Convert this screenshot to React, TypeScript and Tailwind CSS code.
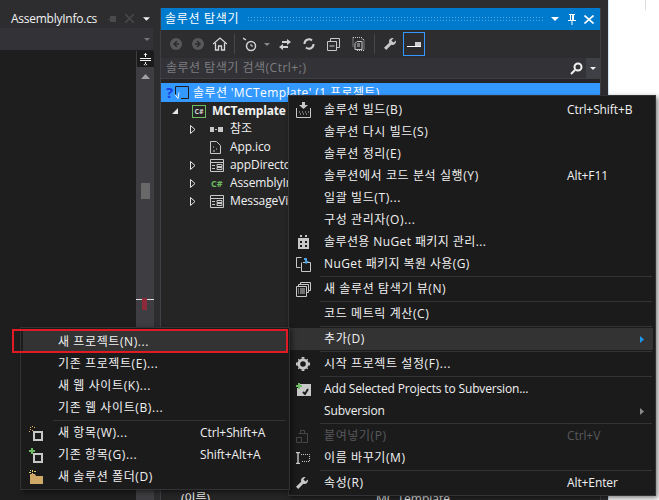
import React from "react";

const FONT = "[font-family:'Open_Sans','Noto_Sans_CJK_KR',sans-serif]";

type Item = { t?: string; k?: string; icon?: React.ReactNode; sep?: boolean; hot?: boolean; arrow?: string; off?: boolean };

const S = "#c8c8c8";

const Build = () => (
  <svg width="15" height="16" viewBox="0 0 15 16" fill="none">
    <path d="M6 0h3v3h3L7.500 7 3 3h3z" fill={S} />
    <path d="M.5 6v9.500h14V6" stroke={S} />
    <path d="M3 10h1M6 10h1M9 10h1M12 10h1M4 12h1M7 12h1M10 12h1" stroke={S} />
  </svg>
);
const Gift = () => (
  <svg className="ml-[2px]" width="11" height="14" viewBox="0 0 11 14" fill={S}>
    <path d="M0 3h11v11H0z" />
    <path d="M2 0h2v2H2zM7 0h2v2H7z" />
    <path d="M2 6h2v2H2zM7 6h2v2H7zM2 10h2v2H2zM7 10h2v2H7z" fill="#1b1b1c" />
  </svg>
);
const Restore = () => (
  <svg width="15" height="15" viewBox="0 0 15 15" fill="none">
    <path d="M4.500 10.500h-4v-10h5M7 5.500h7.500v9h-9v-9" stroke={S} />
    <path d="M8 1h3v3h2l-3 3-1-1V3H8z" fill="#4ba3e3" />
  </svg>
);
const Views = () => (
  <svg width="15" height="15" viewBox="0 0 15 15" fill="none" stroke={S}>
    <path d="M4.500 2.500v-2h10v8h-2" />
    <path d="M2.500 4.500v-2h10v8h-2" />
    <path d="M.5 4.500h10v10H.5z" fill="#1b1b1c" />
    <path d="M2 7h1M4 7h5M2 9h1M4 9h5M2 11h1M4 11h5" />
  </svg>
);
const Gear = () => (
  <svg width="14" height="14" viewBox="0 0 15 15">
    <circle cx="7.500" cy="7.500" r="4.500" fill="none" stroke={S} strokeWidth="3" />
    <path d="M6 0h3v2H6zM6 13h3v2H6zM0 6h2v3H0zM13 6h2v3h-2zM2 3l1-1 1.500 1.500-1 1zM12 2l1 1-1.500 1.500-1-1zM2 12l1 1 1.500-1.500-1-1zM12 13l1-1-1.500-1.500-1 1z" fill={S} />
  </svg>
);
const AddCheck = () => (
  <svg width="15" height="13" viewBox="0 0 15 13">
    <path d="M4 1h11v12H1V5h3z" fill={S} />
    <path d="M2 0h2v2h2v2H4v2H2V4H0V2h2z" fill="#6dbb63" />
    <path d="M7 9l2 2 3-5" stroke="#1b1b1c" strokeWidth="2" fill="none" />
  </svg>
);
const Paste = () => (
  <svg width="12" height="14" viewBox="0 0 12 14" fill="none" stroke="#464649">
    <path d="M2.500 4.500h9v9h-5M4.500 4V1.500h4V4" />
    <path d="M.5 8.500h5v5h-5z" />
  </svg>
);
const Rename = () => (
  <svg width="14" height="12" viewBox="0 0 14 12" fill="none" stroke={S}>
    <path d="M0 .5h4M0 11.500h4M2 1v10" strokeWidth="1.400" />
    <path d="M5 2.500h8.500v7H5" strokeDasharray="1 1" />
  </svg>
);
const Wrench = ({ c = S, s = 12 }: { c?: string; s?: number }) => (
  <svg width={s} height={s} viewBox="0 0 12 12" fill={c}>
    <path d="M8.500 0C6.600 0 5 1.500 5 3.500c0 .4.100.8.200 1.200L0 9.800 2.200 12l5.100-5.200c.4.100.8.200 1.200.2C10.400 7 12 5.400 12 3.500c0-.4-.100-.8-.200-1.100L9.500 4.600 7.400 2.500 9.600.2C9.300.1 8.900 0 8.500 0z" />
  </svg>
);
const NewItem = ({ plus }: { plus?: boolean }) => (
  <svg width="14" height="15" viewBox="0 0 14 15" fill="none">
    {plus ? (
      <path d="M2 0h2v2h2v2H4v2H2V4H0V2h2z" fill="#6dbb63" />
    ) : (
      <path d="M1 1h1v1H1zM3 0h1v1H3zM5 1h1v1H5zM1 3h1v1H1zM3 4h1v1H3zM0 5h1v1H0z" fill="#e0b060" />
    )}
    <path d="M5 6h8v8H5z" stroke={S} strokeWidth="2" />
  </svg>
);
const Folder = () => (
  <svg width="14" height="14" viewBox="0 0 14 14">
    <path d="M1 4h5l1 2h7v8H1z" fill="#d0a868" />
    <path d="M3 0h1v2H3zM0 2h2v1H0zM5 1h2v1H5zM3 3h1v1H3zM1 0h1v1H1z" fill="#e8d070" />
  </svg>
);

const M1: Item[] = [
  { t: "솔루션 빌드(B)", k: "Ctrl+Shift+B", icon: <Build /> },
  { t: "솔루션 다시 빌드(S)" },
  { t: "솔루션 정리(E)" },
  { t: "솔루션에서 코드 분석 실행(Y)", k: "Alt+F11" },
  { t: "일괄 빌드(T)..." },
  { t: "구성 관리자(O)..." },
  { t: "솔루션용 NuGet 패키지 관리...", icon: <Gift /> },
  { t: "NuGet 패키지 복원 사용(G)", icon: <Restore /> },
  { sep: true },
  { t: "새 솔루션 탐색기 뷰(N)", icon: <Views /> },
  { sep: true },
  { t: "코드 메트릭 계산(C)" },
  { sep: true },
  { t: "추가(D)", hot: true, arrow: "#1c97ea" },
  { sep: true },
  { t: "시작 프로젝트 설정(F)...", icon: <Gear /> },
  { sep: true },
  { t: "Add Selected Projects to Subversion...", icon: <AddCheck /> },
  { t: "Subversion", arrow: "#8a8a8a" },
  { sep: true },
  { t: "붙여넣기(P)", k: "Ctrl+V", icon: <Paste />, off: true },
  { t: "이름 바꾸기(M)", icon: <Rename /> },
  { sep: true },
  { t: "속성(R)", k: "Alt+Enter", icon: <Wrench /> },
];

const M2: Item[] = [
  { t: "새 프로젝트(N)...", hot: true },
  { t: "기존 프로젝트(E)..." },
  { t: "새 웹 사이트(K)..." },
  { t: "기존 웹 사이트(B)..." },
  { sep: true },
  { t: "새 항목(W)...", k: "Ctrl+Shift+A", icon: <NewItem /> },
  { t: "기존 항목(G)...", k: "Shift+Alt+A", icon: <NewItem plus /> },
  { t: "새 솔루션 폴더(D)", icon: <Folder /> },
];

function track(t = "") {
  const ko = /[가-힣]/.test(t);
  const en = /[A-Za-z]{3}/.test(t);
  if (ko && en) return "tracking-[0.4px]";
  if (ko) return "tracking-[0.6px]";
  return "tracking-[-0.15px]";
}

function Row({ it, kw, col }: { it: Item; kw: string; col: string }) {
  if (it.sep)
    return (
      <div className="ml-[30px] mr-[1px] py-[1px]">
        <div className="h-px bg-[#333337]" />
      </div>
    );
  return (
    <div className={`flex items-center h-[22px] text-[12px] leading-[22px] whitespace-nowrap ${it.hot ? "bg-[#333334]" : ""} ${it.off ? "text-[#59595b]" : "text-[#f1f1f1]"}`}>
      <div className={`${col} pl-[6px] flex items-center shrink-0`}>{it.icon}</div>
      <div className={`flex-1 ${track(it.t)}`}>{it.t}</div>
      {it.k && <div className={`${kw} tracking-[-0.1px]`}>{it.k}</div>}
      {it.arrow && (
        <div className="w-[13px] shrink-0 flex">
          <svg width="5" height="7" viewBox="0 0 5 7"><path d="M0 0l4 3.500L0 7z" fill={it.arrow} /></svg>
        </div>
      )}
    </div>
  );
}

function TreeRow({ indent, arrow, icon, text, bold }: { indent: string; arrow?: "open" | "closed"; icon: React.ReactNode; text: string; bold?: boolean }) {
  return (
    <div className={`flex items-center h-[18px] text-[12px] text-[#f1f1f1] whitespace-nowrap ${indent}`}>
      <div className="w-[20px] shrink-0 flex items-center">
        {arrow === "open" && <svg width="6" height="6" viewBox="0 0 6 6"><path d="M6 0v6H0z" fill="#e6e6e6" /></svg>}
        {arrow === "closed" && <svg width="6" height="9" viewBox="0 0 6 9"><path d="M.5.500l4.500 4-4.500 4z" fill="none" stroke="#e6e6e6" /></svg>}
      </div>
      <div className="w-[20px] shrink-0 flex items-center">{icon}</div>
      <span className={bold ? "font-bold tracking-[-0.2px]" : "tracking-[-0.1px]"}>{text}</span>
    </div>
  );
}

const FormIcon = () => (
  <svg width="14" height="13" viewBox="0 0 14 13" fill="none" stroke="#c8c8c8">
    <path d="M.5.500h13v12H.5zM1 3.500h12M2 6.500h3M2 9.500h3M7 5.500h5v2H7zM7 8.500h5v2H7z" />
  </svg>
);

export default function App() {
  return (
    <div className={`relative w-[659px] h-[500px] overflow-hidden flex bg-[#2d2d30] ${FONT}`}>
      {/* editor side */}
      <div className="w-[160px] shrink-0 flex flex-col">
        <div className="h-[28px] flex items-center pl-[11px] pt-[9px] text-[12px] text-[#f1f1f1] whitespace-nowrap">
          <span className="tracking-[-0.25px]">AssemblyInfo.cs</span>
          <svg className="ml-[10px]" width="10" height="8" viewBox="0 0 10 8" fill="#4a4a4d"><path d="M1 4h2V1h6v6H3V5H1z" /></svg>
          <svg className="ml-[8px]" width="9" height="9" viewBox="0 0 9 9" stroke="#4a4a4d" strokeWidth="1.500"><path d="M0 0l9 9M9 0l-9 9" /></svg>
          <svg className="ml-[9px]" width="7" height="4" viewBox="0 0 8 4" fill="#f1f1f1"><path d="M0 0h8L4 4z" /></svg>
        </div>
        <div className="h-[23px] mr-[7px] bg-[#333337] border-b border-[#1e1e1e] flex items-center justify-end pr-[3px]">
          <svg width="6" height="3" viewBox="0 0 6 3" fill="#77777a"><path d="M0 0h6L3 3z" /></svg>
        </div>
        <div className="flex-1 flex">
          <div className="w-[136px] bg-[#1e1e1e]" />
          <div className="relative w-[18px] bg-[#3e3e42] flex flex-col items-center">
            <div className="w-[17px] h-[16px] bg-[#1b1b1b] flex items-center justify-center">
              <svg width="11" height="13" viewBox="0 0 11 13" fill="#f1f1f1"><path d="M0 5h11v1H0zM0 7h11v1H0zM5 0h1v4H5zM5 9h1v4H5zM3.500 2L5.500 0l2 2zM3.500 11l2 2 2-2z" /></svg>
            </div>
            <svg className="mt-[7px]" width="9" height="5" viewBox="0 0 9 5" fill="#a0a0a0"><path d="M4.500 0L9 5H0z" /></svg>
            <div className="mt-[104px] w-[9px] h-[16px] bg-[#686868]" />
            <div className="absolute left-0 top-[248px] w-[18px] h-px bg-[#e0e0e0]" />
            <div className="absolute left-[6px] top-[247px] w-[5px] h-[12px] bg-[#8b2b39]" />
          </div>
        </div>
      </div>

      {/* solution explorer */}
      <div className="w-[441px] shrink-0 mt-[8px] flex flex-col border-x border-[#3f3f46]">
        <div className="h-[22px] bg-[#007acc] flex items-center pl-[4px] pr-[6px] text-[12px] text-white whitespace-nowrap">
          <span className="tracking-[0.7px]">솔루션 탐색기</span>
          <div className="flex-1 h-[7px] mx-[8px] bg-[radial-gradient(#4fa8e0_0.6px,transparent_0.7px)] bg-[length:3px_3px]" />
          <svg width="8" height="4" viewBox="0 0 8 4" fill="#fff"><path d="M0 0h8L4 4z" /></svg>
          <svg className="ml-[9px]" width="8" height="11" viewBox="0 0 8 11" fill="#fff"><path d="M1 0h6v1H6v5h2v1H4.500v4h-1V7H0V6h2V1H1zM3 1v5h1V1z" /></svg>
          <svg className="ml-[8px]" width="10" height="9" viewBox="0 0 10 9" stroke="#fff" strokeWidth="1.600"><path d="M.5.500l9 8M9.500.500l-9 8" /></svg>
        </div>
        <div className="h-[28px] flex items-center pl-[9px] gap-[6px]">
          <svg width="12" height="12" viewBox="0 0 12 12"><circle cx="6" cy="6" r="6" fill="#58585a" /><path d="M7 3L4 6l3 3M4 6h5" stroke="#2d2d30" strokeWidth="1.500" fill="none" /></svg>
          <svg className="ml-[4px]" width="12" height="12" viewBox="0 0 12 12"><circle cx="6" cy="6" r="6" fill="#58585a" /><path d="M5 3l3 3-3 3M8 6H3" stroke="#2d2d30" strokeWidth="1.500" fill="none" /></svg>
          <svg className="ml-[3px]" width="14" height="14" viewBox="0 0 14 14" fill="none" stroke="#d8d8d8" strokeWidth="1.300"><path d="M0 7l7-6 7 6M2.500 6v7h3V9h3v4h3V6" /></svg>
          <div className="w-px h-[20px] bg-[#45454a] ml-[1px]" />
          <svg className="ml-[2px]" width="15" height="15" viewBox="0 0 15 15" fill="none" stroke="#d0d0d0"><path d="M0 1l3 2" strokeWidth="1.500" /><circle cx="8" cy="9" r="4.500" strokeWidth="1.500" /><path d="M8 7v2h2" /></svg>
          <svg width="6" height="3" viewBox="0 0 6 3" fill="#88888a"><path d="M0 0h6L3 3z" /></svg>
          <svg className="ml-[3px]" width="12" height="11" viewBox="0 0 12 11" fill="#d0d0d0"><path d="M8 0l4 3-4 3V4H3V2h5zM4 5v2h5v2H4v2L0 8z" /></svg>
          <svg className="ml-[6px]" width="12" height="12" viewBox="0 0 12 12" fill="none" stroke="#d0d0d0" strokeWidth="2"><path d="M10.500 6A4.500 4.500 0 0 1 3 9.500M1.500 6A4.500 4.500 0 0 1 9 2.500" /></svg>
          <svg className="ml-[6px]" width="13" height="13" viewBox="0 0 13 13" fill="none" stroke="#c8c8c8"><path d="M.5 3.500h9v9h-9zM3.500 3V.5h9v9H10M2.500 8h5" /></svg>
          <svg className="ml-[5px]" width="14" height="14" viewBox="0 0 14 14" fill="none" stroke="#c8c8c8"><path d="M2 .5h9v2h2v11H5M2 .5v9" strokeDasharray="1 1" /><path d="M6 4.500h5v8H4v-6zM6 7h3M6 9h3" /></svg>
          <div className="w-px h-[20px] bg-[#45454a] ml-[3px]" />
          <div className="ml-[3px]"><Wrench s={12} c="#c8c8c8" /></div>
          <div className="ml-[1px] w-[22px] h-[24px] border border-[#3399ff] flex items-center justify-center">
            <div className="relative w-[14px] h-[5px]">
              <div className="absolute left-0 bottom-0 w-[14px] h-px bg-white" />
              <div className="absolute right-0 top-0 w-[6px] h-[4px] bg-[#d0d0d0]" />
            </div>
          </div>
        </div>
        <div className="h-[20px] bg-[#333337] flex items-center text-[12px] text-[#7e7e82] pl-[5px] whitespace-nowrap">
          <span className="flex-1 tracking-[0.5px]">솔루션 탐색기 검색(Ctrl+;)</span>
          <svg width="13" height="13" viewBox="0 0 13 13" fill="none" stroke="#f1f1f1"><circle cx="8" cy="5" r="3.500" strokeWidth="2" /><path d="M5 8l-4 4" strokeWidth="2" /></svg>
          <div className="ml-[3px] w-[14px] h-[20px] bg-[#3f3f46] flex items-center justify-center">
            <svg width="6" height="3" viewBox="0 0 6 3" fill="#f1f1f1"><path d="M0 0h6L3 3z" /></svg>
          </div>
        </div>
        <div className="flex-1 bg-[#252526] border-t border-[#3f3f46] pt-[4px] flex flex-col">
          <div className="h-[19px] bg-[#3399ff] flex items-center text-[12px] text-white whitespace-nowrap pl-[5px]">
            <span className="w-[8px] text-[#1a3fe0] font-bold text-[15px] leading-none">?</span>
            <svg className="mr-[4px]" width="15" height="14" viewBox="0 0 15 14" fill="none" stroke="#1e1e1e"><path d="M1.500 9V.5h13v12H7" /><path d="M1 8.500l3 4 1-6" stroke="#f1f1f1" /></svg>
            <span className="tracking-[0.4px]">솔루션 'MCTemplate' (1 프로젝트)</span>
          </div>
          <TreeRow indent="pl-[11px]" arrow="open" bold text="MCTemplate" icon={<div className="w-[14px] h-[13px] border border-[#6dbb63] text-[7px] leading-[11px] text-center text-[#d8d8d8] font-bold">C#</div>} />
          <TreeRow indent="pl-[29px]" arrow="closed" text="참조" icon={<svg width="13" height="5" viewBox="0 0 13 5" fill="#c8c8c8"><path d="M0 0h4v5H0zM5 2h2v1H5zM8 0h5v5H8z" /></svg>} />
          <TreeRow indent="pl-[29px]" text="App.ico" icon={<svg width="11" height="13" viewBox="0 0 11 13" fill="none" stroke="#c8c8c8"><path d="M.5.500h6l4 4v8H.5zM3 6h1M6 8h1M3 10h2" /></svg>} />
          <TreeRow indent="pl-[29px]" arrow="closed" text="appDirectory" icon={<FormIcon />} />
          <TreeRow indent="pl-[29px]" arrow="closed" text="AssemblyInfo.cs" icon={<span className="text-[9px] font-bold text-[#6dbb63] leading-none pl-[1px]">C#</span>} />
          <TreeRow indent="pl-[29px]" arrow="closed" text="MessageView" icon={<FormIcon />} />
          <div className="mt-auto h-[9px] bg-[#252526] pl-[20px] text-[12px] leading-[16px] text-[#f1f1f1] flex whitespace-nowrap">
            <span className="w-[195px] shrink-0">(이름)</span>
            <span>MC Template</span>
          </div>
        </div>
      </div>

      {/* window to the right */}
      <div className="w-[7px] shrink-0" />
      <div className="flex-1 bg-white border-l border-[#cfe6f7] flex justify-end pr-[13px]">
        <div className="w-px h-[10px] bg-[#dddddd]" />
      </div>

      {/* main context menu */}
      <div className="absolute left-[288px] top-[95px] w-[368px] h-[401px] bg-[#1b1b1c] border border-[#333337] pt-[3px] pl-px pr-[2px] shadow-[2px_2px_5px_rgba(0,0,0,0.5)]">
        {M1.map((it, i) => (
          <Row key={i} it={it} kw="w-[86px] shrink-0" col="w-[34px]" />
        ))}
      </div>

      {/* submenu */}
      <div className="absolute left-[20px] top-[327px] w-[270px] h-[163px] bg-[#1b1b1c] border border-[#333337] pt-[3px] px-[2px] shadow-[2px_2px_5px_rgba(0,0,0,0.5)]">
        {M2.map((it, i) => (
          <Row key={i} it={it} kw="w-[87px] shrink-0" col="w-[35px]" />
        ))}
      </div>

      {/* red annotation */}
      <div className="absolute left-[12px] top-[329px] w-[276px] h-[24px] border-2 border-[#e01b24]" />
    </div>
  );
}
